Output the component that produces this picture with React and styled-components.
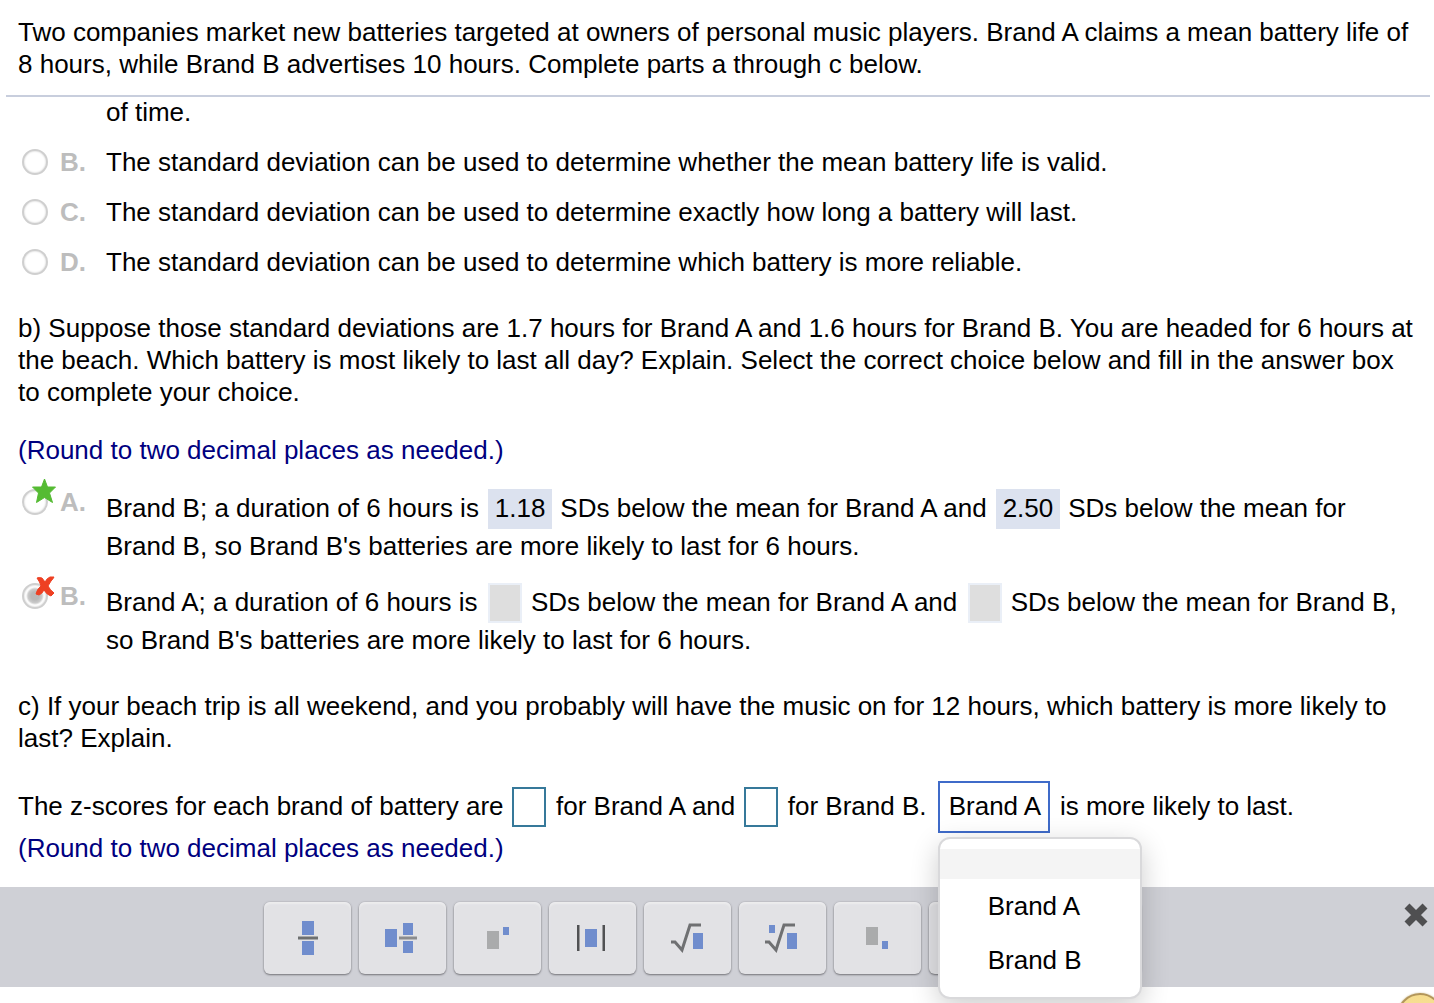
import { useState } from 'react';
import styled, { createGlobalStyle } from 'styled-components';

const GlobalStyle = createGlobalStyle`
  * {
    box-sizing: border-box;
  }

  body {
    margin: 0;
    background: #fff;
    color: #000;
    font-family: 'Liberation Sans', Arial, Helvetica, sans-serif;
    font-size: 26px;
    line-height: 32px;
  }

  input,
  select,
  button {
    font: inherit;
    color: inherit;
  }
`;

const Page = styled.div`
  height: 100vh;
  overflow: hidden;
`;

const Header = styled.header`
  margin: 0 4px -1px 6px;
  padding: 16px 12px 15px;
  border-bottom: 2px solid #c8cedd;
`;

const Content = styled.main`
  padding: 0 18px 23px;
`;

const Text = styled.p`
  margin: ${({ $gap = 0 }) => $gap}px 0 0;
`;

const Hint = styled(Text)`
  color: #000080;
`;

const Options = styled.div`
  display: flex;
  flex-direction: column;
  gap: ${({ $tall }) => ($tall ? 15 : 18)}px;
  margin-top: ${({ $tall }) => ($tall ? 20 : 0)}px;
`;

const OptionRow = styled.div`
  display: grid;
  grid-template-columns: 42px 46px 1fr;
  align-items: start;
`;

const OptionText = styled.label`
  grid-column: 3;
  padding-top: ${({ $tall }) => ($tall ? 3 : 0)}px;
  line-height: ${({ $tall }) => ($tall ? 38 : 32)}px;
`;

const Letter = styled.span`
  color: #bdbdbd;
  font-weight: bold;
`;

const RadioBox = styled.span`
  position: relative;
  display: flex;
  align-items: center;
  height: 32px;
  padding-left: 4px;
`;

const Radio = styled.input`
  appearance: none;
  width: 26px;
  height: 26px;
  margin: 0;
  border: 2px solid #cfcfcf;
  border-radius: 50%;
  background: #fff;
  box-shadow: inset 0 0 2px #c6c6c6;

  &:checked {
    background: radial-gradient(circle, #b9b9b9 0 4px, #cbcbcb 7px, #fff 9px);
  }
`;

const Mark = styled.svg`
  position: absolute;
  top: -8px;
  left: 12px;
  width: 28px;
  height: 28px;
`;

const Filled = styled.input`
  width: 64px;
  height: 40px;
  margin: -5px 1px -3px 2px;
  padding: 0 0 2px;
  border: 0;
  background: #dce2ef;
  text-align: center;
  vertical-align: middle;
`;

const Blank = styled.input`
  width: 34px;
  height: 40px;
  margin: ${({ disabled }) => (disabled ? '-5px 2px -3px 3px' : '-5px 3px -3px 1px')};
  padding: 0 2px;
  border: 2px solid ${({ disabled }) => (disabled ? '#eaeff7' : '#36799a')};
  background: ${({ disabled }) => (disabled ? '#dedede' : '#fff')};
  vertical-align: middle;
`;

const ZScores = styled.div`
  margin-top: 27px;
  line-height: 50px;
`;

const SelectWrap = styled.span`
  position: relative;
  display: inline-block;
  height: 52px;
  margin: 0 3px -1px 4px;
  vertical-align: top;
`;

const BrandSelect = styled.select`
  appearance: none;
  display: block;
  width: 112px;
  height: 52px;
  padding: 0 0 2px 9px;
  border: 2px solid #3f6bc9;
  border-radius: 0;
  background: #fff;
  line-height: 32px;
  outline: none;
`;

const Menu = styled.ul`
  position: absolute;
  z-index: 2;
  top: 56px;
  left: 0;
  width: 204px;
  margin: 0;
  padding: 10px 0;
  border: 2px solid #d9d9db;
  border-radius: 12px;
  background: #fff;
  box-shadow: 0 8px 28px rgba(0, 0, 0, 0.2);
  list-style: none;
`;

const MenuItem = styled.li`
  height: ${({ $empty }) => ($empty ? 30 : 54)}px;
  padding-left: 48px;
  background: ${({ $empty }) => ($empty ? '#f4f4f4' : 'transparent')};
  line-height: 54px;
  cursor: default;
`;

const Keypad = styled.div`
  display: flex;
  align-items: flex-start;
  padding: 15px 6px 13px 0;
  background: #cfd0d6;
`;

const Keys = styled.div`
  display: flex;
  flex: 1;
  justify-content: center;
  gap: 8px;
`;

const Key = styled.button`
  display: flex;
  align-items: center;
  justify-content: center;
  width: ${({ $wide }) => ($wide ? 212 : 87)}px;
  height: 72px;
  padding: 0;
  border: 0;
  border-radius: 6px;
  background: #e2e2e5;
  box-shadow:
    0 1px 2px #77777c,
    0 0 2px #a9a9b0,
    inset 0 2px 2px #ececee;
`;

const KeyIcon = styled.svg`
  width: 49px;
  height: 48px;
  fill: #708dcd;
`;

const CloseButton = styled.button`
  display: flex;
  width: 24px;
  height: 26px;
  padding: 0;
  border: 0;
  background: none;
`;

const Footer = styled.footer`
  display: flex;
  justify-content: flex-end;
  padding-top: 6px;
`;

const HelpButton = styled.button`
  flex: none;
  width: 46px;
  height: 46px;
  margin-right: -9px;
  border: 2px solid #b3965a;
  border-radius: 50%;
  background: linear-gradient(#f6dc8c, #f8e7a8);
  box-shadow: 0 0 2px #c9b98d;
`;

const claims = [
  { letter: 'B', text: 'The standard deviation can be used to determine whether the mean battery life is valid.' },
  { letter: 'C', text: 'The standard deviation can be used to determine exactly how long a battery will last.' },
  { letter: 'D', text: 'The standard deviation can be used to determine which battery is more reliable.' },
];

const brands = ['', 'Brand A', 'Brand B'];

const keys = [
  {
    name: 'Fraction',
    icon: (
      <>
        <path d="M19 7h12v14H19zM19 27h12v14H19z" />
        <path d="M15 22.500h20v3H15z" fill="#6e7070" />
      </>
    ),
  },
  {
    name: 'Mixed number',
    icon: (
      <>
        <path d="M7 15h12v18H7zM25 9h10v12H25zM25 27h10v12H25z" />
        <path d="M21 22.500h18v3H21z" fill="#8b8c8e" />
      </>
    ),
  },
  {
    name: 'Exponent',
    icon: (
      <>
        <path d="M14 17h12v18H14z" fill="#aaabac" />
        <path d="M30 13h6v8h-6z" />
      </>
    ),
  },
  {
    name: 'Absolute value',
    icon: (
      <>
        <path d="M17 15h12v18H17z" />
        <path d="M9 11h2.500v26H9zM34.500 11h2.500v26h-2.500z" fill="#505153" />
      </>
    ),
  },
  {
    name: 'Square root',
    icon: (
      <>
        <path d="M8 28h4l7 8 8-25h11" fill="none" stroke="#6f7072" strokeWidth="3" />
        <path d="M30 19h10v16H30z" />
      </>
    ),
  },
  {
    name: 'Nth root',
    icon: (
      <>
        <path d="M7 28h4l7 8 8-25h11" fill="none" stroke="#6f7072" strokeWidth="3" />
        <path d="M29 19h10v16H29zM11 11h6v8h-6z" />
      </>
    ),
  },
  {
    name: 'Subscript',
    icon: (
      <>
        <path d="M13 13h12v18H13z" fill="#aaabac" />
        <path d="M29 27h6v8h-6z" />
      </>
    ),
  },
];

function Option({ id, group, letter, checked = false, mark, tall, children }) {
  return (
    <OptionRow>
      <RadioBox>
        <Radio type="radio" id={id} name={group} checked={checked} disabled readOnly />
        {mark}
      </RadioBox>
      <Letter>{letter}.</Letter>
      <OptionText htmlFor={id} $tall={tall}>
        {children}
      </OptionText>
    </OptionRow>
  );
}

const star = (
  <Mark viewBox="0 0 28 28" aria-hidden="true">
    <path
      d="M14.500 1l3 8h8l-6 6 3 9.500-8-5-8 5 2-9.500-6-6h9z"
      fill="#55bb33"
      stroke="#55bb33"
      strokeLinejoin="round"
    />
  </Mark>
);

const cross = (
  <Mark viewBox="0 0 28 28" aria-hidden="true">
    <path
      d="M7 6q2-1 5 0l3 4q2-4 5-5h4q-1 2-3 4l-3 5q2 4 6 7l-3 3q-4-1-7-6-2 4-5 5l-3-1q1-5 5-8-1-4-4-8z"
      fill="#ee4023"
      stroke="#ee4023"
      strokeLinejoin="round"
    />
  </Mark>
);

export default function App() {
  const [brand, setBrand] = useState('Brand A');
  const [menuOpen, setMenuOpen] = useState(true);

  function handlePick(value) {
    setBrand(value);
    setMenuOpen(false);
  }

  return (
    <>
      <GlobalStyle />
      <Page>
        <Header>
          <Text>
            Two companies market new batteries targeted at owners of personal music players. Brand A
            claims a mean battery life of 8 hours, while Brand B advertises 10 hours. Complete parts a
            through c below.
          </Text>
        </Header>

        <Content>
          <Options>
            <OptionRow>
              <OptionText as="span">of time.</OptionText>
            </OptionRow>
            {claims.map(({ letter, text }) => (
              <Option key={letter} id={`a-${letter}`} group="part-a" letter={letter}>
                {text}
              </Option>
            ))}
          </Options>

          <Text $gap={34}>
            b) Suppose those standard deviations are 1.7 hours for Brand A and 1.6 hours for Brand B.
            You are headed for 6 hours at the beach. Which battery is most likely to last all day?
            Explain. Select the correct choice below and fill in the answer box to complete your
            choice.
          </Text>
          <Hint $gap={26}>(Round to two decimal places as needed.)</Hint>

          <Options $tall>
            <Option id="b-A" group="part-b" letter="A" mark={star} tall>
              Brand B; a duration of 6 hours is{' '}
              <Filled aria-label="SDs for Brand A" value="1.18" readOnly /> SDs below the mean for
              Brand A and <Filled aria-label="SDs for Brand B" value="2.50" readOnly /> SDs below the
              mean for Brand B, so Brand B's batteries are more likely to last for 6 hours.
            </Option>
            <Option id="b-B" group="part-b" letter="B" mark={cross} checked tall>
              Brand A; a duration of 6 hours is <Blank aria-label="SDs for Brand A" disabled /> SDs
              below the mean for Brand A and <Blank aria-label="SDs for Brand B" disabled /> SDs below
              the mean for Brand B, so Brand B's batteries are more likely to last for 6 hours.
            </Option>
          </Options>

          <Text $gap={31}>
            c) If your beach trip is all weekend, and you probably will have the music on for 12
            hours, which battery is more likely to last? Explain.
          </Text>

          <ZScores>
            The z-scores for each brand of battery are <Blank aria-label="z-score for Brand A" /> for
            Brand A and <Blank aria-label="z-score for Brand B" /> for Brand B.{' '}
            <SelectWrap>
              <BrandSelect
                aria-label="Brand more likely to last"
                value={brand}
                onChange={(event) => setBrand(event.target.value)}
                onClick={() => setMenuOpen(true)}
              >
                {brands.map((name) => (
                  <option key={name}>{name}</option>
                ))}
              </BrandSelect>
              {menuOpen && (
                <Menu role="listbox" aria-label="Brand">
                  {brands.map((name) => (
                    <MenuItem
                      key={name}
                      role="option"
                      aria-selected={name === brand}
                      $empty={!name}
                      onClick={() => handlePick(name)}
                    >
                      {name}
                    </MenuItem>
                  ))}
                </Menu>
              )}
            </SelectWrap>{' '}
            is more likely to last.
          </ZScores>
          <Hint>(Round to two decimal places as needed.)</Hint>
        </Content>

        <Keypad>
          <Keys>
            {keys.map(({ name, icon }) => (
              <Key key={name} type="button" aria-label={name}>
                <KeyIcon viewBox="0 0 49 48">{icon}</KeyIcon>
              </Key>
            ))}
            <Key type="button" aria-label="More" $wide />
          </Keys>
          <CloseButton type="button" aria-label="Close">
            <svg width="24" height="26" viewBox="0 0 24 26">
              <path d="M3 4l18 18M21 4L3 22" stroke="#4f4f51" strokeWidth="7" />
            </svg>
          </CloseButton>
        </Keypad>

        <Footer>
          <HelpButton type="button" aria-label="Help" />
        </Footer>
      </Page>
    </>
  );
}
